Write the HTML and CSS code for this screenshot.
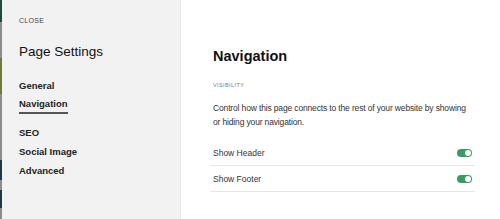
FILE: index.html
```html
<!DOCTYPE html>
<html lang="en">
<head>
    <meta charset="UTF-8">
    <meta name="viewport" content="width=device-width, initial-scale=1.0">
    <title>Page Settings</title>
    <link rel="stylesheet" href="styles.css">
</head>
<body>
    <div class="edge">
        <span class="edge-a"></span>
        <span class="edge-b"></span>
        <span class="edge-c"></span>
        <span class="edge-d"></span>
    </div>
    <aside class="sidebar">
        <div class="close">CLOSE</div>
        <h2 class="sidebar-title">Page Settings</h2>
        <nav class="menu">
            <a class="menu-item">General</a>
            <a class="menu-item active">Navigation</a>
            <a class="menu-item gap">SEO</a>
            <a class="menu-item">Social Image</a>
            <a class="menu-item">Advanced</a>
        </nav>
    </aside>
    <main class="panel">
        <h1 class="panel-title">Navigation</h1>
        <div class="section-label">VISIBILITY</div>
        <p class="description">Control how this page connects to the rest of your website by showing or hiding your navigation.</p>
        <div class="toggle-row">
            <span>Show Header</span>
            <span class="toggle"></span>
        </div>
        <div class="toggle-row">
            <span>Show Footer</span>
            <span class="toggle"></span>
        </div>
    </main>
</body>
</html>
```

FILE: styles.css
```css
html, body {
    height: 100%;
}
body {
    margin: 0;
    display: flex;
    font-family: "Liberation Sans", Arial, sans-serif;
    color: #1a1a1a;
    background-color: #fff;
    overflow: hidden;
}
.edge {
    width: 2px;
    display: flex;
    flex-direction: column;
    background-color: #8c8c8c;
}
.edge span {
    display: block;
}
.edge-a {
    height: 22px;
    background-color: #1f4a3f;
}
.edge-b {
    height: 36px;
    margin-top: 36px;
    background-color: #6f7b3a;
}
.edge-c {
    height: 20px;
    margin-top: 66px;
    background-color: #233845;
}
.edge-d {
    height: 18px;
    margin-top: 10px;
    background-color: #233845;
}
.sidebar {
    width: 179px;
    background-color: #f2f2f2;
    padding: 17px 0 0 17px;
    box-sizing: border-box;
    border-right: 1px solid #ebebeb;
}
.close {
    font-size: 7px;
    letter-spacing: 0.3px;
    color: #444;
}
.sidebar-title {
    font-size: 13.5px;
    font-weight: 500;
    margin: 20px 0 0;
    color: #111;
}
.menu {
    display: flex;
    flex-direction: column;
    align-items: flex-start;
    margin-top: 21px;
}
.menu-item {
    font-size: 9.5px;
    font-weight: bold;
    color: #222;
    height: 19px;
    line-height: 12px;
}
.menu-item.active {
    border-bottom: 2px solid #555;
    height: auto;
    padding-bottom: 2px;
    margin-top: -1px;
}
.menu-item.gap {
    margin-top: 13px;
}
.panel {
    flex: 1;
    padding: 48px 25px 0 32px;
}
.panel-title {
    font-size: 14.5px;
    font-weight: bold;
    margin: 0;
    color: #111;
}
.section-label {
    font-size: 5.5px;
    letter-spacing: 0.4px;
    color: #777;
    margin-top: 18px;
}
.description {
    font-size: 8.5px;
    letter-spacing: -0.15px;
    line-height: 14px;
    color: #333;
    margin: 13px 0 11px;
}
.toggle-row {
    display: flex;
    justify-content: space-between;
    align-items: center;
    height: 25px;
    font-size: 8.5px;
    color: #333;
    border-bottom: 1px solid #e6e6e6;
    margin-left: -3px;
    padding-left: 3px;
}
.toggle {
    position: relative;
    width: 15px;
    height: 8px;
    border-radius: 4px;
    background-color: #3b9a63;
    margin-right: 3px;
}
.toggle::after {
    content: "";
    position: absolute;
    right: 1px;
    top: 1px;
    width: 6px;
    height: 6px;
    border-radius: 50%;
    background-color: #fff;
}
```
